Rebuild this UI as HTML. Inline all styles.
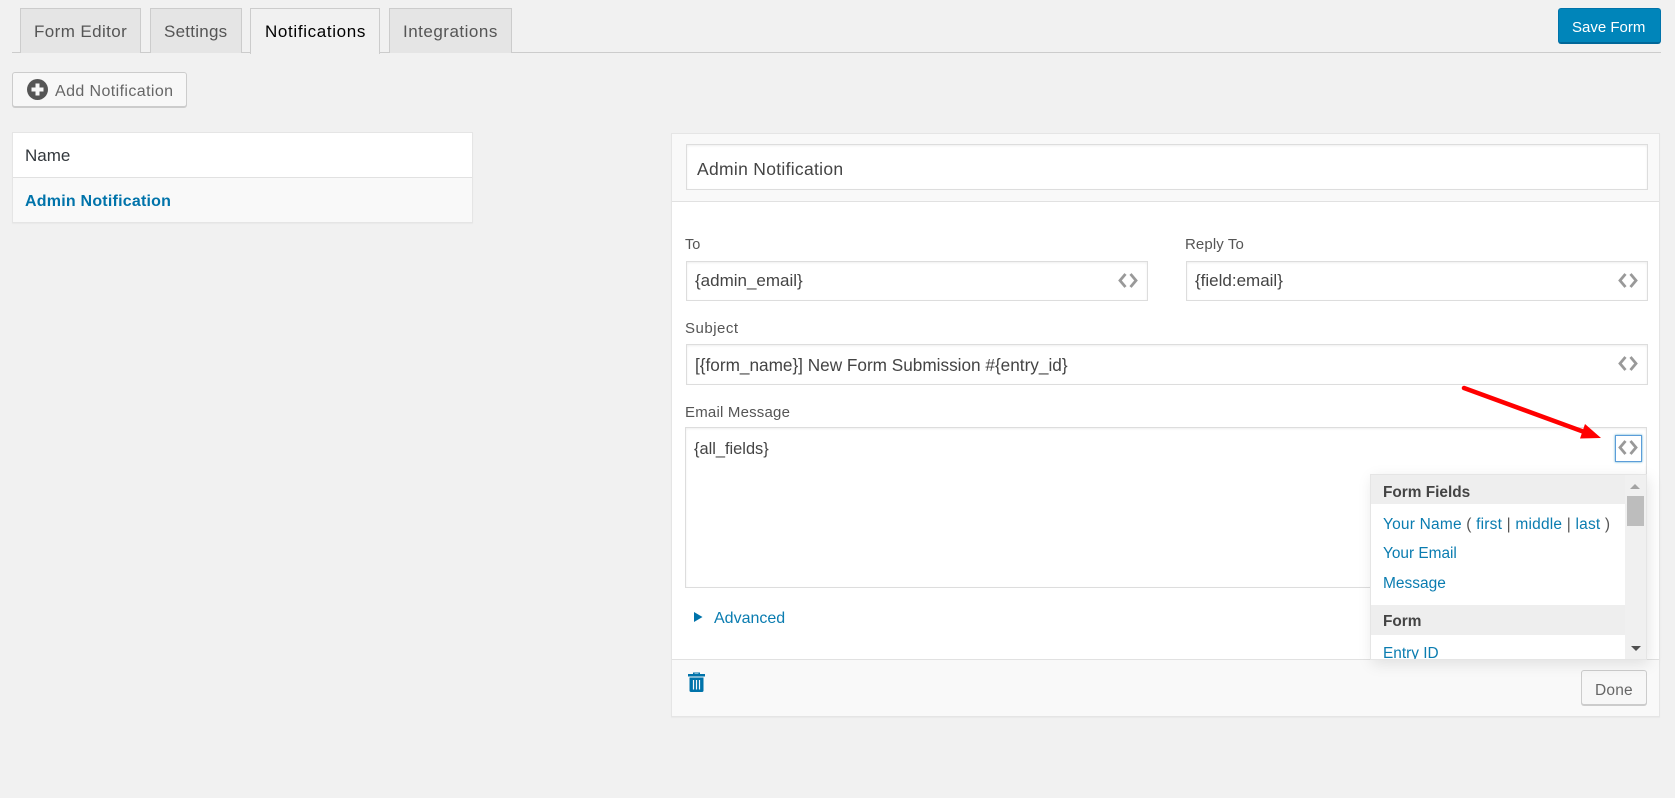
<!DOCTYPE html>
<html><head><meta charset="utf-8"><style>
html,body{margin:0;padding:0;width:1675px;height:798px;overflow:hidden;background:#f1f1f1}
body{font-family:"Liberation Sans",sans-serif;position:relative;color:#444}
div,a,span.t{position:absolute;box-sizing:border-box}
.t{white-space:nowrap;line-height:20px;height:20px}
.tab{top:8px;height:45px;background:#e5e5e5;border:1px solid #ccc;border-bottom:none}
.inp{background:#fff;border:1px solid #ddd;box-shadow:inset 0 1px 2px rgba(0,0,0,.07)}
.ic{position:absolute}
.l{color:#0a7cb0}
.btn{background:#f7f7f7;border:1px solid #ccc;box-shadow:0 1px 0 #ccc;border-radius:3px}
</style></head><body>
<div style="left:12px;top:52px;width:1649px;height:1px;background:#ccc"></div>
<div class="tab" style="left:20px;width:121px"></div>
<div class="tab" style="left:150px;width:92px"></div>
<div class="tab" style="left:250px;width:130px;background:#f1f1f1;height:46px"></div>
<div class="tab" style="left:389px;width:123px"></div>
<span class="t" style="left:34px;top:22px;font-size:17px;letter-spacing:.4px;color:#555">Form Editor</span>
<span class="t" style="left:164px;top:22px;font-size:17px;letter-spacing:.25px;color:#555">Settings</span>
<span class="t" style="left:265px;top:22px;font-size:17px;letter-spacing:.65px;color:#000">Notifications</span>
<span class="t" style="left:403px;top:22px;font-size:17px;letter-spacing:.5px;color:#555">Integrations</span>

<div style="left:1558px;top:8px;width:103px;height:36px;background:#0085ba;border:1px solid #0073aa;border-bottom:2px solid #006799;border-radius:3px"></div>
<span class="t" style="left:1572px;top:18px;font-size:15px;color:#fff">Save Form</span>

<div class="btn" style="left:12px;top:72px;width:175px;height:35px"></div>
<svg class="ic" style="left:27px;top:79px" width="21" height="21" viewBox="0 0 21 21"><circle cx="10.500" cy="10.500" r="10.500" fill="#555"/><path d="M8.500 4.500h4v4h4v4h-4v4h-4v-4h-4v-4h4z" fill="#f7f7f7"/></svg>
<span class="t" style="left:55px;top:82px;font-size:16px;letter-spacing:.4px;color:#666">Add Notification</span>

<div style="left:12px;top:132px;width:461px;height:91px;background:#f9f9f9;border:1px solid #e5e5e5;box-shadow:0 1px 1px rgba(0,0,0,.04)"></div>
<div style="left:13px;top:133px;width:459px;height:45px;background:#fff;border-bottom:1px solid #e1e1e1"></div>
<span class="t" style="left:25px;top:146px;font-size:17px;color:#32373c">Name</span>
<span class="t" style="left:25px;top:192px;font-size:16px;letter-spacing:.22px;font-weight:bold;color:#0073aa">Admin Notification</span>

<div style="left:671px;top:133px;width:989px;height:584px;background:#fff;border:1px solid #e5e5e5;box-shadow:0 1px 1px rgba(0,0,0,.04)"></div>
<div style="left:672px;top:134px;width:987px;height:68px;background:#f9f9f9;border-bottom:1px solid #e1e1e1"></div>
<div class="inp" style="left:686px;top:144px;width:962px;height:46px"></div>
<span class="t" style="left:697px;top:159px;font-size:17.500px;letter-spacing:.3px;color:#444">Admin Notification</span>

<span class="t" style="left:685px;top:235px;font-size:14.500px;color:#555">To</span>
<div class="inp" style="left:686px;top:261px;width:462px;height:40px"></div>
<span class="t" style="left:695px;top:271px;font-size:17px">{admin_email}</span>
<svg class="ic" style="left:1117px;top:271px" width="22" height="20" viewBox="0 0 22 20"><path d="M8.500 3L3 9.500l5.500 6.500M13.500 3L19 9.500 13.500 16" fill="none" stroke="#999" stroke-width="2.800"/></svg>

<span class="t" style="left:1185px;top:235px;font-size:15px;letter-spacing:.1px;color:#555">Reply To</span>
<div class="inp" style="left:1186px;top:261px;width:462px;height:40px"></div>
<span class="t" style="left:1195px;top:271px;font-size:17px">{field:email}</span>
<svg class="ic" style="left:1617px;top:271px" width="22" height="20" viewBox="0 0 22 20"><path d="M8.500 3L3 9.500l5.500 6.500M13.500 3L19 9.500 13.500 16" fill="none" stroke="#999" stroke-width="2.800"/></svg>

<span class="t" style="left:685px;top:319px;font-size:15px;letter-spacing:.5px;color:#555">Subject</span>
<div class="inp" style="left:686px;top:344px;width:962px;height:41px"></div>
<span class="t" style="left:695px;top:355px;font-size:17.200px">[{form_name}] New Form Submission #{entry_id}</span>
<svg class="ic" style="left:1617px;top:354px" width="22" height="20" viewBox="0 0 22 20"><path d="M8.500 3L3 9.500l5.500 6.500M13.500 3L19 9.500 13.500 16" fill="none" stroke="#999" stroke-width="2.800"/></svg>

<span class="t" style="left:685px;top:403px;font-size:15px;letter-spacing:.2px;color:#555">Email Message</span>
<div class="inp" style="left:685px;top:427px;width:962px;height:161px"></div>
<span class="t" style="left:694px;top:439px;font-size:16.400px">{all_fields}</span>

<div style="left:1615px;top:435px;width:27px;height:27px;border:1px solid #5b9dd9;box-shadow:0 0 2px rgba(30,140,190,.8);background:#fff"></div>
<svg class="ic" style="left:1617px;top:438px" width="22" height="20" viewBox="0 0 22 20"><path d="M8.500 3L3 9.500l5.500 6.500M13.500 3L19 9.500 13.500 16" fill="none" stroke="#999" stroke-width="2.800"/></svg>

<svg class="ic" style="left:1455px;top:380px" width="160" height="70" viewBox="0 0 160 70"><path d="M9 8L132 53" stroke="#f00" stroke-width="4.500" stroke-linecap="round"/><path d="M146 58L125 58.500 L130 44z" fill="#f00"/></svg>

<svg class="ic" style="left:694px;top:612px" width="9" height="10" viewBox="0 0 9 10"><path d="M0 0l8.500 5L0 10z" fill="#0073aa"/></svg>
<span class="t" style="left:714px;top:609px;font-size:16px;color:#0a7cb0">Advanced</span>

<div style="left:672px;top:659px;width:987px;height:57px;background:#f9f9f9;border-top:1px solid #e1e1e1"></div>
<svg class="ic" style="left:687px;top:671px" width="20" height="22" viewBox="0 0 20 22"><path d="M1 3h5V1.500h7V3h5v2.500H1zM7.500 2.500V3h4V2.500z" fill="#0073aa" fill-rule="evenodd"/><path d="M2.500 6.500h14v13a1.500 1.500 0 0 1-1.500 1.500H4a1.500 1.500 0 0 1-1.500-1.500z" fill="#0073aa"/><path d="M6.500 9v9.500M9.500 9v9.500M12.500 9v9.500" stroke="#f9f9f9" stroke-width="1.200"/></svg>
<div class="btn" style="left:1581px;top:670px;width:66px;height:35px"></div>
<span class="t" style="left:1595px;top:681px;font-size:15.500px;letter-spacing:.2px;color:#666">Done</span>

<div style="left:1370px;top:474px;width:277px;height:186px;background:#fff;border:1px solid #e5e5e5;box-shadow:2px 4px 14px rgba(0,0,0,.1)"></div>
<div style="left:1371px;top:475px;width:254px;height:29px;background:#eee"></div>
<div style="left:1371px;top:605px;width:254px;height:30px;background:#eee"></div>
<div style="left:1625px;top:475px;width:21px;height:184px;background:#f0f0f0"></div>
<div style="left:1627px;top:496px;width:17px;height:30px;background:#bdbdbd"></div>
<svg class="ic" style="left:1630px;top:483px" width="10" height="7"><path d="M0 6L5 1l5 5z" fill="#a3a3a3"/></svg>
<svg class="ic" style="left:1631px;top:645px" width="10" height="7"><path d="M0 1h10L5 6z" fill="#505050"/></svg>
<span class="t" style="left:1383px;top:483px;font-size:15.400px;font-weight:bold;color:#444">Form Fields</span>
<span class="t" style="left:1383px;top:515px;font-size:15.500px;letter-spacing:.2px;color:#555"><span class="l">Your Name</span> ( <span class="l">first</span> | <span class="l">middle</span> | <span class="l">last</span> )</span>
<span class="t" style="left:1383px;top:544px;font-size:15.400px;color:#0a7cb0">Your Email</span>
<span class="t" style="left:1383px;top:574px;font-size:15.500px;color:#0a7cb0">Message</span>
<span class="t" style="left:1383px;top:612px;font-size:15.400px;font-weight:bold;color:#444">Form</span>
<div style="left:1371px;top:635px;width:254px;height:24px;overflow:hidden"><span class="t" style="left:12px;top:9px;font-size:15.400px;color:#0a7cb0">Entry ID</span></div>
</body></html>
